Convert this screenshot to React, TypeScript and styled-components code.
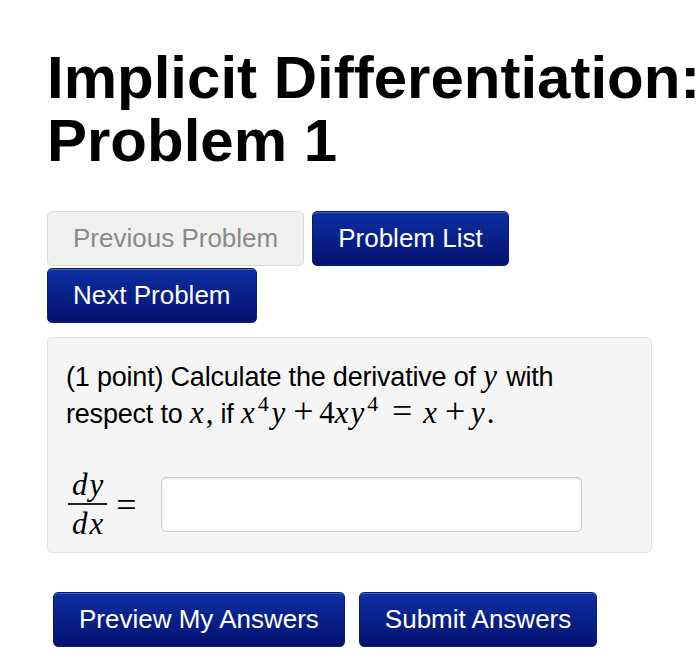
import React from 'react';
import styled, {createGlobalStyle} from 'styled-components';

const GlobalStyle = createGlobalStyle`
  html, body {
    margin: 0;
    padding: 0;
    background: #ffffff;
  }
  body {
    font-family: 'Liberation Sans', Arial, Helvetica, sans-serif;
    color: #000;
  }
`;

const Page = styled.div`
  padding: 46px 0 0 47px;
  width: 700px;
  box-sizing: border-box;
`;

const Title = styled.h1`
  margin: 0;
  font-size: 60px;
  line-height: 63px;
  font-weight: 700;
  white-space: nowrap;
`;

const Nav = styled.div`
  display: flex;
  flex-wrap: wrap;
  column-gap: 8px;
  row-gap: 2px;
  width: 480px;
  margin-top: 39px;
`;

const Button = styled.button<{$disabled?: boolean}>`
  height: 55px;
  padding: 0 25px;
  font-family: 'Liberation Sans', Arial, sans-serif;
  font-size: 26px;
  border-radius: 5px;
  box-sizing: border-box;
  cursor: pointer;
  color: ${p => (p.$disabled ? '#8a8a8a' : '#ffffff')};
  background: ${p =>
    p.$disabled ? '#f0f0f0' : 'linear-gradient(#0d2fa2, #041270)'};
  border: 1px solid ${p => (p.$disabled ? '#dadada' : '#0a1c72')};
  box-shadow: ${p =>
    p.$disabled ? 'none' : 'inset 0 1px 0 rgba(255,255,255,0.25)'};
`;

const Panel = styled.div`
  margin-top: 14px;
  width: 605px;
  box-sizing: border-box;
  background: #f5f5f5;
  border: 1px solid #e3e3e3;
  border-radius: 5px;
  padding: 20px 18px 13px 18px;
`;

const Question = styled.p`
  margin: 0;
  font-size: 27px;
  line-height: 36px;
  letter-spacing: -0.2px;
`;

const mathFont = `'Liberation Serif', 'Times New Roman', serif`;

const M = styled.span`
  font-family: ${mathFont};
  font-style: italic;
  font-size: 31px;
  letter-spacing: 2px;
`;

const N = styled.span`
  font-family: ${mathFont};
  font-size: 31px;
`;

const Op = styled.span<{$wide?: boolean}>`
  font-family: ${mathFont};
  font-size: 36px;
  line-height: 0;
  padding: 0 ${p => (p.$wide ? 11 : 6)}px;
`;

const Sup = styled.sup`
  font-family: ${mathFont};
  font-size: 22px;
  line-height: 0;
  vertical-align: 12px;
  margin: 0 3px 0 1px;
`;

const AnswerRow = styled.div`
  display: flex;
  align-items: center;
  margin-top: 38px;
  padding-left: 2px;
`;

const Fraction = styled.div`
  display: inline-flex;
  flex-direction: column;
  align-items: center;
  font-family: ${mathFont};
  font-style: italic;
  font-size: 31px;
  line-height: 30px;
  letter-spacing: 2px;
  span {
    padding: 0 2px 0 4px;
  }
  span:first-child {
    border-bottom: 2px solid #222;
    padding-bottom: 3px;
  }
  span:last-child {
    padding-top: 4px;
  }
`;

const Equals = styled.span`
  font-family: ${mathFont};
  font-size: 36px;
  margin: 0 24px 0 9px;
`;

const Input = styled.input`
  width: 421px;
  height: 55px;
  box-sizing: border-box;
  border: 1px solid #cccccc;
  border-radius: 5px;
  background: #fff;
  box-shadow: inset 0 1px 2px rgba(0, 0, 0, 0.12);
  font-size: 24px;
  padding: 0 10px;
`;

const Actions = styled.div`
  display: flex;
  gap: 14px;
  margin: 39px 0 0 6px;
`;

export default function App() {
  return (
    <Page>
      <GlobalStyle />
      <Title>
        Implicit Differentiation:
        <br />
        Problem 1
      </Title>
      <Nav>
        <Button $disabled>Previous Problem</Button>
        <Button>Problem List</Button>
        <Button>Next Problem</Button>
      </Nav>
      <Panel>
        <Question>
          (1 point) Calculate the derivative of <M>y</M> with
          <br />
          respect to <M>x</M>
          <N>,</N> if <M>x</M>
          <Sup>4</Sup>
          <M>y</M>
          <Op>+</Op>
          <N>4</N>
          <M>xy</M>
          <Sup>4</Sup>
          <Op $wide>=</Op>
          <M>x</M>
          <Op>+</Op>
          <M>y</M>
          <N>.</N>
        </Question>
        <AnswerRow>
          <Fraction>
            <span>dy</span>
            <span>dx</span>
          </Fraction>
          <Equals>=</Equals>
          <Input type="text" />
        </AnswerRow>
      </Panel>
      <Actions>
        <Button>Preview My Answers</Button>
        <Button>Submit Answers</Button>
      </Actions>
    </Page>
  );
}
